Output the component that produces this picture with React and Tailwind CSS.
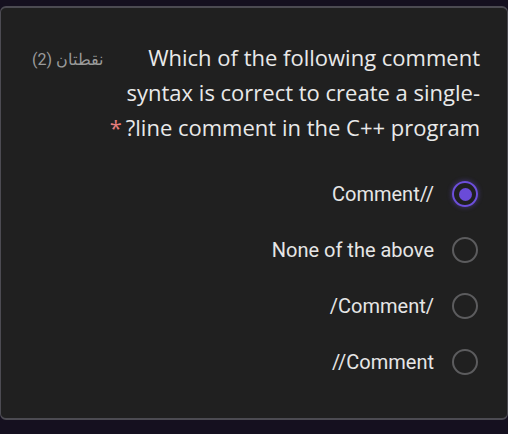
const options = [
    { label: "Comment//", selected: true },
    { label: "None of the above", selected: false },
    { label: "/Comment/", selected: false },
    { label: "//Comment", selected: false },
];

function Radio({ selected }) {
    if (selected) {
        return (
            <span className="flex h-[26px] w-[26px] items-center justify-center rounded-full border-[2.5px] border-[#6d4fdc] shadow-[0_0_4px_1px_rgba(109,79,220,0.35)]">
                <span className="h-[13px] w-[13px] rounded-full bg-[#6a4bd8]" />
            </span>
        );
    }
    return <span className="h-[26px] w-[26px] rounded-full border-2 border-[#5c5c5e]" />;
}

export default function App() {
    return (
        <div className="h-[434px] w-[508px] bg-[#15101f] pt-[6px]">
            <div className="h-[414px] rounded-[6px] border-x border-y-2 border-[#4c4b52] bg-[#202020] pl-[31px] pr-[27px] pt-[32px] font-['Roboto',sans-serif]">
                <div className="flex items-start justify-between">
                    <span className="mt-[8px] text-[16px] text-[#9b9b9b]">نقطتان (2)</span>
                    <div className="text-right font-['Open_Sans',sans-serif] text-[22px] leading-[35px] text-[#e9e9e9]">
                        <div>Which of the following comment</div>
                        <div>syntax is correct to create a single-</div>
                        <div>
                            <span className="mr-[4px] text-[#e57c7c]">*</span>?line comment in the C++ program
                        </div>
                    </div>
                </div>
                <div className="mr-[2px] mt-[21px] flex flex-col items-end">
                    {options.map((opt) => (
                        <div key={opt.label} className="flex h-[56px] items-center gap-[18px]">
                            <span className="text-[20px] text-[#e6e6e6]">{opt.label}</span>
                            <Radio selected={opt.selected} />
                        </div>
                    ))}
                </div>
            </div>
        </div>
    );
}
